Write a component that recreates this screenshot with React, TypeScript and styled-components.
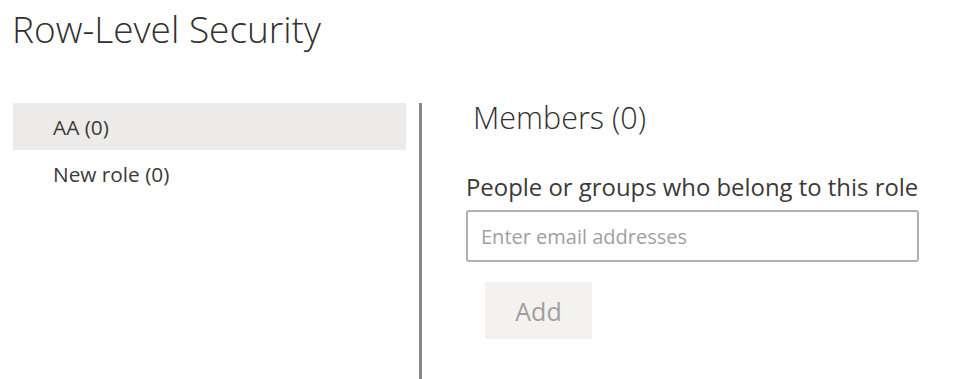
import React from "react";
import styled, { createGlobalStyle } from "styled-components";

const Global = createGlobalStyle`
  html, body { margin: 0; padding: 0; background: #ffffff; }
  body { font-family: "Open Sans", "Noto Sans", sans-serif; color: #323130; }
  * { box-sizing: border-box; }
`;

const Page = styled.div`
  width: 969px;
  height: 379px;
  overflow: hidden;
  display: flex;
  flex-direction: column;
`;

const Title = styled.h1`
  margin: 0;
  padding: 5px 0 0 12px;
  height: 103px;
  font-size: 37px;
  font-weight: 300;
  line-height: 48px;
  color: #323130;
`;

const Body = styled.div`
  flex: 1;
  display: flex;
  align-items: stretch;
`;

const RoleList = styled.ul`
  list-style: none;
  margin: 0 0 0 13px;
  padding: 0;
  width: 393px;
  display: flex;
  flex-direction: column;
`;

const RoleItem = styled.li<{ $selected?: boolean }>`
  height: 47px;
  padding-left: 40px;
  display: flex;
  align-items: center;
  font-size: 20.8px;
  color: #3b3a39;
  background: ${(p) => (p.$selected ? "#edebe9" : "transparent")};
`;

const Divider = styled.div`
  width: 3px;
  margin-left: 13px;
  background: #8a8886;
`;

const Members = styled.section`
  margin-left: 44px;
  width: 453px;
  display: flex;
  flex-direction: column;
`;

const MembersTitle = styled.h2`
  margin: 0;
  padding-left: 7px;
  font-size: 30.5px;
  font-weight: 300;
  line-height: 29px;
  color: #323130;
`;

const FieldLabel = styled.label`
  margin-top: 42px;
  font-size: 23.9px;
  line-height: 26px;
  color: #3b3a39;
  white-space: nowrap;
`;

const EmailInput = styled.input`
  margin-top: 10px;
  height: 52px;
  width: 453px;
  border: 2px solid #b3b0ad;
  border-radius: 3px;
  padding: 0 13px;
  font-family: inherit;
  font-size: 20px;
  color: #323130;
  outline: none;
  &::placeholder { color: #a19f9d; }
`;

const AddButton = styled.button`
  margin: 20px 0 0 19px;
  width: 107px;
  height: 57px;
  border: none;
  background: #f3f2f1;
  color: #a19f9d;
  font-family: inherit;
  font-size: 25px;
  padding: 0;
  cursor: default;
`;

export default function App() {
  return (
    <Page>
      <Global />
      <Title>Row-Level Security</Title>
      <Body>
        <RoleList>
          <RoleItem $selected>AA (0)</RoleItem>
          <RoleItem>New role (0)</RoleItem>
        </RoleList>
        <Divider />
        <Members>
          <MembersTitle>Members (0)</MembersTitle>
          <FieldLabel htmlFor="emails">People or groups who belong to this role</FieldLabel>
          <EmailInput id="emails" placeholder="Enter email addresses" />
          <div>
            <AddButton disabled>Add</AddButton>
          </div>
        </Members>
      </Body>
    </Page>
  );
}
